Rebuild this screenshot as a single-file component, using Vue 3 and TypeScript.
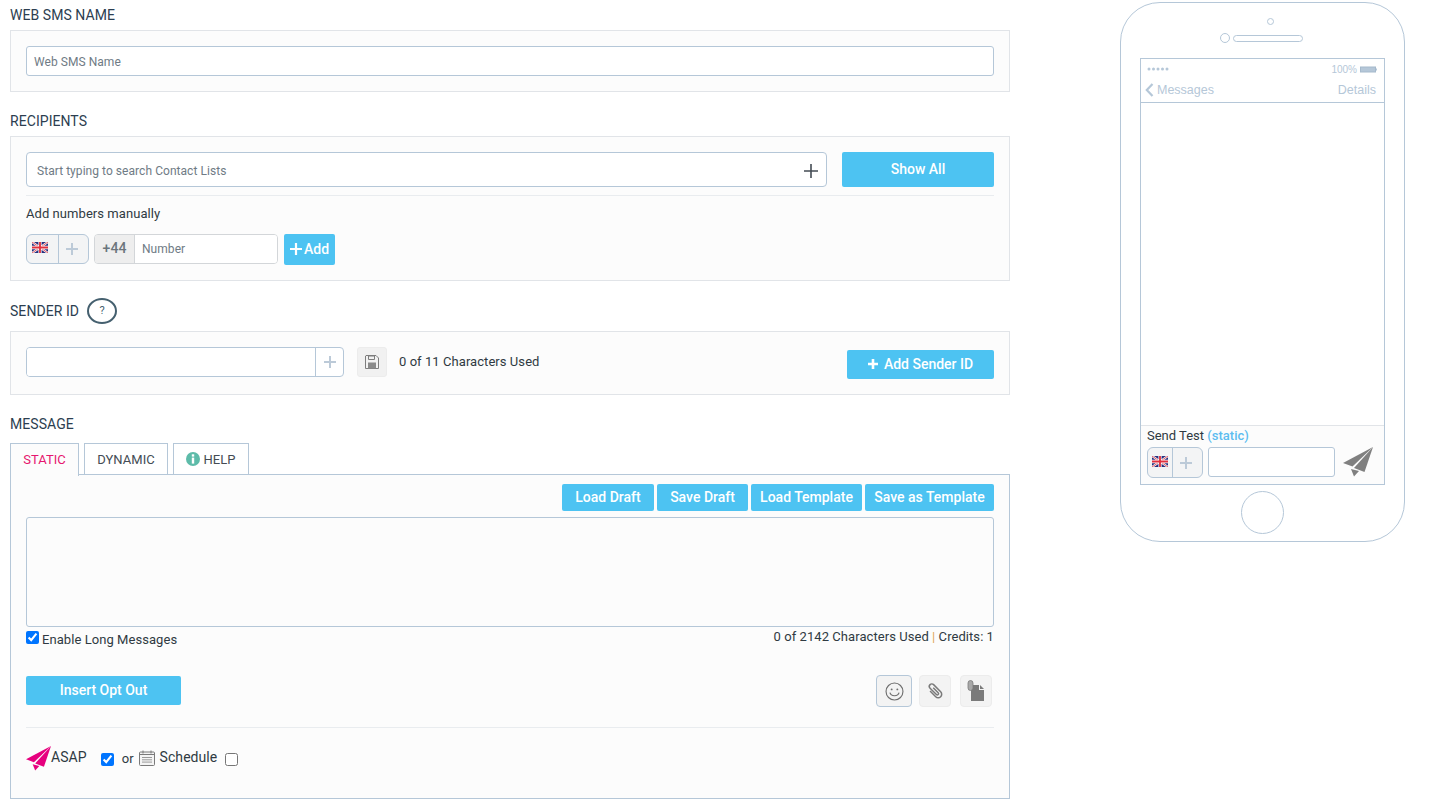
<script setup lang="ts">
const draftButtons = ['Load Draft', 'Save Draft', 'Load Template', 'Save as Template']
</script>

<template>
  <div class="page">
    <div class="form-col">
      <h4 class="section-label first">WEB SMS NAME</h4>
      <div class="panel name-panel">
        <input class="text-input name-input" type="text" placeholder="Web SMS Name" />
      </div>

      <h4 class="section-label recipients-label">RECIPIENTS</h4>
      <div class="panel recipients-panel">
        <div class="search-row">
          <div class="search-box">
            <input class="search-input" type="text" placeholder="Start typing to search Contact Lists" />
            <svg class="search-plus" viewBox="0 0 14 14" width="14" height="14">
              <path d="M7 0v14M0 7h14" stroke="#444c54" stroke-width="1.6" fill="none" />
            </svg>
          </div>
          <button class="btn show-all">Show All</button>
        </div>
        <div class="divider"></div>
        <div class="manual-title">Add numbers manually</div>
        <div class="manual-row">
          <div class="flag-picker">
            <span class="flag-cell">
              <svg class="flag" viewBox="0 0 60 40" width="16" height="11" preserveAspectRatio="none">
                <rect width="60" height="40" fill="#27307f" />
                <path d="M0 0l60 40M60 0L0 40" stroke="#fff" stroke-width="8" />
                <path d="M0 0l60 40M60 0L0 40" stroke="#d8313f" stroke-width="3" />
                <path d="M30 0v40M0 20h60" stroke="#fff" stroke-width="12" />
                <path d="M30 0v40M0 20h60" stroke="#e0303f" stroke-width="7" />
              </svg>
            </span>
            <span class="plus-cell">
              <svg viewBox="0 0 12 12" width="12" height="12">
                <path d="M6 0v12M0 6h12" stroke="#bccad8" stroke-width="2" fill="none" />
              </svg>
            </span>
          </div>
          <div class="number-group">
            <span class="prefix">+44</span>
            <input class="number-input" type="text" placeholder="Number" />
          </div>
          <button class="btn add-btn">
            <svg viewBox="0 0 12 12" width="12" height="12">
              <path d="M6 0v12M0 6h12" stroke="#fff" stroke-width="2.200" fill="none" />
            </svg>
            Add
          </button>
        </div>
      </div>

      <div class="sender-head">
        <h4 class="section-label sender-label">SENDER ID</h4>
        <span class="help-circle">?</span>
      </div>
      <div class="panel sender-panel">
        <div class="sender-input">
          <input class="sender-field" type="text" />
          <span class="sender-plus">
            <svg viewBox="0 0 12 12" width="12" height="12">
              <path d="M6 0v12M0 6h12" stroke="#bccad8" stroke-width="2" fill="none" />
            </svg>
          </span>
        </div>
        <span class="save-btn">
          <svg viewBox="0 0 14 14" width="14" height="14">
            <path d="M1 .5h10L13.500 3v10.500H.5V1z" fill="none" stroke="#7d7d7d" stroke-width="1" />
            <path d="M3.500 1h6v3.500h-6z" fill="none" stroke="#7d7d7d" stroke-width="1" />
            <rect x="3" y="7.500" width="8" height="6" fill="#8a8a8a" />
          </svg>
        </span>
        <span class="used-text">0 of 11 Characters Used</span>
        <button class="btn add-sender">
          <svg viewBox="0 0 10 10" width="10" height="10">
            <path d="M5 0v10M0 5h10" stroke="#fff" stroke-width="2.600" fill="none" />
          </svg>
          Add Sender ID
        </button>
      </div>

      <h4 class="section-label message-label">MESSAGE</h4>
      <div class="tabs">
        <span class="tab active">STATIC</span>
        <span class="tab dynamic">DYNAMIC</span>
        <span class="tab help">
          <svg viewBox="0 0 14 14" width="14" height="14">
            <circle cx="7" cy="7" r="7" fill="#5dbba9" />
            <rect x="5.800" y="2.300" width="2.400" height="2.300" fill="#fff" />
            <rect x="5.800" y="5.600" width="2.400" height="6" fill="#fff" />
          </svg>
          HELP
        </span>
      </div>
      <div class="message-panel">
        <div class="draft-row">
          <button v-for="label in draftButtons" :key="label" class="btn draft-btn">{{ label }}</button>
        </div>
        <textarea class="message-box"></textarea>
        <div class="count-row">
          <label class="long-msg"><input type="checkbox" checked /><span>Enable Long Messages</span></label>
          <span class="count-text">0 of 2142 Characters Used <i>|</i> Credits: 1</span>
        </div>
        <div class="tools-row">
          <button class="btn opt-out">Insert Opt Out</button>
          <div class="tool-icons">
            <span class="tool smile">
              <svg viewBox="0 0 20 20" width="19" height="19">
                <circle cx="10" cy="10" r="8.900" fill="none" stroke="#6f6f6f" stroke-width="1.200" />
                <circle cx="7" cy="7.800" r="1" fill="#6f6f6f" />
                <circle cx="13" cy="7.800" r="1" fill="#6f6f6f" />
                <path d="M5.200 11.300c1 4.200 8.600 4.200 9.600 0" fill="none" stroke="#6f6f6f" stroke-width="1.200" />
              </svg>
            </span>
            <span class="tool clip">
              <svg viewBox="0 0 18 18" width="18" height="18">
                <g transform="rotate(-45 9 9)">
                  <path d="M5.500 5.500v8a3.500 3.500 0 0 0 7 0V3.500a2.500 2.500 0 0 0-5 0v9a1.200 1.200 0 0 0 2.500 0V5.500" fill="none" stroke="#7a7a7a" stroke-width="1.500" />
                </g>
              </svg>
            </span>
            <span class="tool file">
              <svg viewBox="0 0 18 22" width="18" height="22">
                <path d="M4 5h8v5h5v11H4z" fill="#7a7a7a" />
                <path d="M13 5l4 4h-4z" fill="#7a7a7a" />
                <rect x="1" y="0.500" width="5" height="10" rx="2.500" fill="#a8a8a8" stroke="#7a7a7a" stroke-width="0.800" />
              </svg>
            </span>
          </div>
        </div>
        <div class="divider bottom"></div>
        <div class="schedule-row">
          <svg class="plane" viewBox="0 0 30 30" width="25" height="25">
            <path d="M30 0L0 16l9.500 3.500z" fill="#e6007e" />
            <path d="M30 0L11 21l10.500 4z" fill="#e6007e" />
            <path d="M8 22l3 7.500 5-5.500z" fill="#e6007e" />
          </svg>
          <span class="asap">ASAP</span>
          <input class="check-asap" type="checkbox" checked />
          <span class="or">or</span>
          <svg class="calendar" viewBox="0 0 16 16" width="16" height="16">
            <rect x="0.500" y="2" width="15" height="13.500" rx="1" fill="#f4f4f4" stroke="#7a7a7a" />
            <path d="M4 0.500v3M12 0.500v3M0.500 4.500h15" stroke="#7a7a7a" fill="none" />
            <path d="M3 7.500h10M3 9.800h10M3 12.100h10" stroke="#9a9a9a" fill="none" />
          </svg>
          <span class="schedule">Schedule</span>
          <input class="check-schedule" type="checkbox" />
        </div>
      </div>
    </div>

    <div class="phone">
      <div class="camera-dot"></div>
      <div class="speaker-row">
        <span class="front-cam"></span>
        <span class="speaker"></span>
      </div>
      <div class="screen">
        <div class="status-bar">
          <svg viewBox="0 0 22 4" width="22" height="4">
            <circle v-for="n in 5" :key="n" :cx="n * 4.500 - 2.500" cy="2" r="1.500" fill="#b5c7d8" />
          </svg>
          <span class="battery-wrap">
            100%
            <svg viewBox="0 0 17 7" width="17" height="7">
              <rect x="0.500" y="1" width="15" height="5" fill="#b5c7d8" stroke="#a5b9cc" />
              <rect x="16" y="2.500" width="1" height="2" fill="#b5c7d8" />
            </svg>
          </span>
        </div>
        <div class="nav-bar">
          <span class="back">
            <svg viewBox="0 0 9 14" width="9" height="14">
              <path d="M7.500 1L1.800 7l5.700 6" fill="none" stroke="#b5c7d8" stroke-width="2.200" />
            </svg>
            Messages
          </span>
          <span>Details</span>
        </div>
        <div class="chat-area"></div>
        <div class="send-test">
          <div class="send-title">Send Test <span class="static-tag">(static)</span></div>
          <div class="send-row">
            <div class="flag-picker small">
              <span class="flag-cell">
                <svg class="flag" viewBox="0 0 60 40" width="16" height="11" preserveAspectRatio="none">
                  <rect width="60" height="40" fill="#27307f" />
                  <path d="M0 0l60 40M60 0L0 40" stroke="#fff" stroke-width="8" />
                  <path d="M0 0l60 40M60 0L0 40" stroke="#d8313f" stroke-width="3" />
                  <path d="M30 0v40M0 20h60" stroke="#fff" stroke-width="12" />
                  <path d="M30 0v40M0 20h60" stroke="#e0303f" stroke-width="7" />
                </svg>
              </span>
              <span class="plus-cell">
                <svg viewBox="0 0 12 12" width="12" height="12">
                  <path d="M6 0v12M0 6h12" stroke="#bccad8" stroke-width="2" fill="none" />
                </svg>
              </span>
            </div>
            <input class="test-input" type="text" />
            <svg class="send-plane" viewBox="0 0 30 30" width="30" height="30">
              <path d="M30 0L0 16l9.500 3.500z" fill="#808080" />
              <path d="M30 0L11 21l10.500 4z" fill="#808080" />
              <path d="M8 22l3 7.500 5-5.500z" fill="#808080" />
            </svg>
          </div>
        </div>
      </div>
      <div class="home-btn"></div>
    </div>
  </div>
</template>

<style>
body {
  background: #fff;
}
</style>

<style scoped>
.page {
  display: flex;
  align-items: flex-start;
  padding-left: 10px;
  font-family: Roboto, "Liberation Sans", sans-serif;
  color: #2f3a42;
  letter-spacing: 0.06px;
}

.form-col {
  width: 1000px;
  flex: none;
}

.section-label {
  margin: 0;
  font-size: 14px;
  line-height: 20px;
  font-weight: 400;
  color: #2c3e50;
}

.section-label.first {
  margin-top: 5px;
  margin-bottom: 5px;
}

.recipients-label {
  margin-top: 19px;
  margin-bottom: 5px;
}

.message-label {
  margin-top: 19px;
  margin-bottom: 9px;
}

.panel {
  box-sizing: border-box;
  border: 1px solid #e1e4e8;
  background: #fcfcfc;
  padding: 15px;
}

.name-panel {
  height: 62px;
}

.text-input,
.search-input,
.number-input,
.sender-field,
.test-input {
  font-family: inherit;
  font-size: 12px;
  letter-spacing: 0.05px;
  outline: none;
  background: #fff;
  color: #333;
}

input::placeholder {
  color: #6f7b85;
  opacity: 1;
}

.name-input {
  box-sizing: border-box;
  display: block;
  width: 100%;
  height: 30px;
  border: 1px solid #b5c7d8;
  border-radius: 3px;
  padding: 2px 7px 0;
}

.btn {
  border: none;
  border-radius: 2px;
  background: #4dc3f2;
  color: #fff;
  font-family: inherit;
  font-size: 14px;
  font-weight: 500;
  letter-spacing: 0;
  padding: 0 0 2px;
  cursor: pointer;
}

.recipients-panel {
  height: 145px;
}

.search-row {
  display: flex;
  justify-content: space-between;
}

.search-box {
  position: relative;
  width: 801px;
  height: 35px;
}

.search-input {
  box-sizing: border-box;
  width: 100%;
  height: 100%;
  border: 1px solid #b5c7d8;
  border-radius: 4px;
  padding: 2px 10px 0;
}

.search-plus {
  position: absolute;
  right: 9px;
  top: 12px;
}

.show-all {
  width: 152px;
  height: 35px;
}

.divider {
  height: 1px;
  background: #e9ecef;
  margin-top: 8px;
}

.manual-title {
  margin-top: 10px;
  font-size: 13px;
  line-height: 16px;
  color: #2f3a42;
}

.manual-row {
  display: flex;
  margin-top: 12px;
}

.flag-picker {
  box-sizing: border-box;
  display: flex;
  width: 63px;
  height: 30px;
  margin-top: 0;
  border: 1px solid #b5c7d8;
  border-radius: 6px;
  background: #f3f4f5;
  overflow: hidden;
}

.flag-cell {
  box-sizing: border-box;
  width: 32px;
  display: flex;
  align-items: center;
  justify-content: center;
  border-right: 1px solid #b5c7d8;
  padding: 0 6px 3px 0;
}

.plus-cell {
  flex: 1;
  display: flex;
  align-items: center;
  justify-content: center;
  padding-right: 3px;
}

.number-group {
  box-sizing: border-box;
  display: flex;
  width: 184px;
  height: 30px;
  margin-left: 5px;
  border: 1px solid #d3d6d9;
  border-radius: 4px;
  overflow: hidden;
}

.prefix {
  box-sizing: border-box;
  width: 40px;
  background: #eeeeee;
  border-right: 1px solid #d3d6d9;
  color: #6b757c;
  font-size: 14px;
  font-weight: 500;
  text-align: center;
  line-height: 26px;
}

.number-input {
  flex: 1;
  min-width: 0;
  border: none;
  padding: 0 7px;
}

.add-btn {
  width: 51px;
  height: 31px;
  margin-left: 6px;
  display: flex;
  align-items: center;
  justify-content: center;
  gap: 2px;
}

.sender-head {
  display: flex;
  align-items: center;
  height: 26px;
  margin-top: 17px;
  margin-bottom: 7px;
}

.help-circle {
  box-sizing: border-box;
  width: 30px;
  height: 26px;
  margin-left: 8px;
  border: 2px solid #45606f;
  border-radius: 50%;
  font-size: 11px;
  line-height: 22px;
  text-align: center;
  color: #45606f;
}

.sender-panel {
  position: relative;
  display: flex;
  align-items: flex-start;
  height: 64px;
}

.sender-input {
  box-sizing: border-box;
  display: flex;
  width: 318px;
  height: 30px;
  border: 1px solid #b5c7d8;
  border-radius: 4px;
  overflow: hidden;
  background: #fff;
}

.sender-field {
  flex: 1;
  min-width: 0;
  border: none;
  border-right: 1px solid #b5c7d8;
}

.sender-plus {
  width: 27px;
  display: flex;
  align-items: center;
  justify-content: center;
}

.save-btn {
  box-sizing: border-box;
  width: 30px;
  height: 30px;
  margin-left: 13px;
  display: flex;
  align-items: center;
  justify-content: center;
  background: #f1f1f1;
  border: 1px solid #ececec;
  border-radius: 3px;
}

.used-text {
  margin-left: 12px;
  font-size: 13px;
  line-height: 30px;
}

.add-sender {
  width: 147px;
  height: 29px;
  margin-left: auto;
  margin-top: 3px;
  display: flex;
  align-items: center;
  justify-content: center;
  gap: 6px;
}

.tabs {
  display: flex;
  gap: 5px;
  height: 32px;
  margin-bottom: -1px;
  position: relative;
}

.tab {
  box-sizing: border-box;
  height: 31px;
  border: 1px solid #b5c7d8;
  border-bottom: none;
  background: #fff;
  display: flex;
  align-items: center;
  justify-content: center;
  font-size: 13px;
  color: #444c54;
}

.tab.active {
  width: 69px;
  height: 33px;
  padding-bottom: 2px;
  color: #e6176f;
  background: #fcfcfc;
  position: relative;
  z-index: 1;
}

.tab.dynamic {
  width: 84px;
}

.tab.help {
  width: 76px;
  gap: 3px;
}

.message-panel {
  box-sizing: border-box;
  height: 325px;
  border: 1px solid #b5c7d8;
  background: #fcfcfc;
  padding: 9px 15px 0;
}

.draft-row {
  display: flex;
  justify-content: flex-end;
  gap: 3px;
}

.draft-btn {
  height: 27px;
}

.draft-btn:nth-child(1) {
  width: 92px;
}

.draft-btn:nth-child(2) {
  width: 91px;
}

.draft-btn:nth-child(3) {
  width: 111px;
}

.draft-btn:nth-child(4) {
  width: 129px;
}

.message-box {
  box-sizing: border-box;
  display: block;
  width: 100%;
  height: 110px;
  margin-top: 6px;
  border: 1px solid #b5c7d8;
  border-radius: 3px;
  background: #fcfcfc;
  outline: none;
  resize: none;
}

.count-row {
  display: flex;
  justify-content: space-between;
  align-items: flex-start;
  height: 49px;
  font-size: 13px;
}

.long-msg {
  display: flex;
  align-items: flex-start;
}

.long-msg input {
  width: 13px;
  height: 13px;
  margin: 4px 3px 0 0;
}

.long-msg span {
  line-height: 16px;
  margin-top: 5px;
}

.count-text {
  line-height: 16px;
  margin-top: 2px;
}

.count-text i {
  font-style: normal;
  color: #e0a458;
}

.tools-row {
  display: flex;
  justify-content: space-between;
  align-items: flex-start;
}

.opt-out {
  width: 155px;
  height: 29px;
}

.tool-icons {
  display: flex;
  margin-right: 2px;
  margin-top: -1px;
}

.tool {
  box-sizing: border-box;
  width: 32px;
  height: 32px;
  display: flex;
  align-items: center;
  justify-content: center;
  background: #f3f3f3;
  border: 1px solid #ececec;
  border-radius: 4px;
}

.tool.smile {
  width: 36px;
  border-color: #b5c7d8;
  margin-right: 7px;
}

.tool.clip {
  margin-right: 9px;
}

.divider.bottom {
  margin-top: 20px;
}

.schedule-row {
  display: flex;
  align-items: center;
  height: 26px;
  margin-top: 17px;
  font-size: 14px;
  color: #2f3a42;
}

.asap {
  margin-bottom: 3px;
}

.check-asap {
  width: 13px;
  height: 13px;
  margin: 3px 0 0 14px;
}

.or {
  margin-left: 8px;
  font-size: 13px;
}

.calendar {
  margin-left: 5px;
}

.schedule {
  margin-left: 5px;
  margin-bottom: 3px;
}

.check-schedule {
  width: 13px;
  height: 13px;
  margin: 3px 0 0 8px;
}

/* phone mockup */
.phone {
  box-sizing: border-box;
  flex: none;
  width: 285px;
  height: 540px;
  margin-left: 110px;
  margin-top: 2px;
  border: 1.5px solid #b5c7d8;
  border-radius: 40px;
  display: flex;
  flex-direction: column;
  align-items: center;
  letter-spacing: 0;
}

.camera-dot {
  box-sizing: border-box;
  width: 7px;
  height: 7px;
  margin-top: 15px;
  margin-left: 16px;
  border: 1px solid #b5c7d8;
  border-radius: 50%;
}

.speaker-row {
  display: flex;
  align-items: center;
  gap: 3px;
  margin-top: 8px;
  margin-left: -3px;
}

.front-cam {
  box-sizing: border-box;
  width: 10px;
  height: 10px;
  border: 1px solid #b5c7d8;
  border-radius: 50%;
}

.speaker {
  box-sizing: border-box;
  width: 70px;
  height: 7px;
  border: 1px solid #b5c7d8;
  border-radius: 4px;
}

.screen {
  box-sizing: border-box;
  width: 245px;
  height: 427px;
  margin-top: 15px;
  border: 1.5px solid #b5c7d8;
  display: flex;
  flex-direction: column;
}

.status-bar {
  display: flex;
  justify-content: space-between;
  align-items: center;
  height: 20px;
  padding: 0 7px 0 6px;
  font-family: "Liberation Sans", Arial, sans-serif;
  font-size: 10px;
  color: #b5c7d8;
}

.battery-wrap {
  display: flex;
  align-items: center;
  gap: 3px;
}

.nav-bar {
  box-sizing: border-box;
  display: flex;
  justify-content: space-between;
  align-items: center;
  height: 24px;
  padding: 0 8px 2px 4px;
  border-bottom: 1.5px solid #b5c7d8;
  font-family: "Liberation Sans", Arial, sans-serif;
  font-size: 12.500px;
  color: #b5c7d8;
}

.back {
  display: flex;
  align-items: center;
  gap: 3px;
}

.chat-area {
  flex: 1;
}

.send-test {
  box-sizing: border-box;
  height: 59px;
  border-top: 1px solid #e1e4e8;
  background: #fcfcfc;
  padding: 2px 6px 0;
}

.send-title {
  font-size: 13px;
  line-height: 16px;
}

.static-tag {
  color: #5dbdf0;
  font-weight: 500;
}

.send-row {
  display: flex;
  align-items: flex-start;
  margin-top: 3px;
}

.flag-picker.small {
  width: 56px;
  height: 31px;
}

.flag-picker.small .flag-cell {
  width: 25px;
  padding-right: 0;
}

.test-input {
  box-sizing: border-box;
  width: 127px;
  height: 30px;
  margin-left: 5px;
  border: 1px solid #b5c7d8;
  border-radius: 3px;
}

.send-plane {
  margin-left: 8px;
}

.home-btn {
  box-sizing: border-box;
  width: 43px;
  height: 43px;
  margin-top: 6px;
  border: 1px solid #b5c7d8;
  border-radius: 50%;
}
</style>
